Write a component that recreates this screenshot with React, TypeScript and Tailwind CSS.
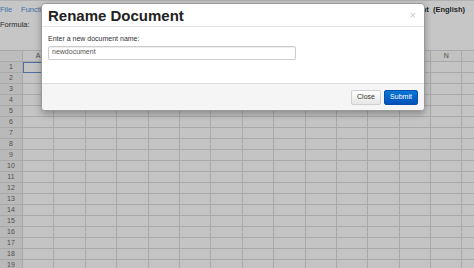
import React from "react";

const cols = ["A", "B", "C", "D", "E", "F", "G", "H", "I", "J", "K", "L", "M", "N", ""];
const rows = Array.from({ length: 19 }, (_, i) => i + 1);

function Sheet() {
  return (
    <div className="grid grid-cols-[23px_repeat(15,31.4px)] text-[7px] text-[#505050]">
      <div className="h-[11px] border-r border-b border-[#a9a9a9] bg-[#bdbdbd]" />
      {cols.map((c, i) => (
        <div
          key={i}
          className="h-[11px] border-r border-b border-[#a9a9a9] bg-[#c2c2c2] flex items-center justify-center"
        >
          {c}
        </div>
      ))}
      {rows.map((r) => (
        <React.Fragment key={r}>
          <div className="h-[11px] border-r border-b border-[#a9a9a9] bg-[#b9b9b9] flex items-center justify-center">
            {r}
          </div>
          {cols.map((c, i) => (
            <div
              key={i}
              className={
                r === 1 && i === 0
                  ? "h-[11px] border border-[#4d6fa3] bg-[#c4c4c4]"
                  : "h-[11px] border-r border-b border-[#a9a9a9] bg-[#c4c4c4]"
              }
            />
          ))}
        </React.Fragment>
      ))}
    </div>
  );
}

export default function App() {
  return (
    <div className="relative w-[474px] h-[268px] overflow-hidden bg-[#c6c6c6] font-['Liberation_Sans',Arial,sans-serif]">
      <div className="h-[51px] border-b border-[#a9a9a9]">
        <div className="h-[18px] flex items-center justify-between pr-[9px] border-t border-[#b0b0b0]">
          <div className="flex gap-[9px] text-[7.5px] text-[#3f6fa8]">
            <span>File</span>
            <span>Functions</span>
          </div>
          <span className="text-[7.5px] font-bold text-[#1e1e1e]">Document &nbsp;(English)</span>
        </div>
        <div className="h-[13px] flex items-center text-[7.5px] text-[#2a2a2a]">Formula:</div>
      </div>
      <Sheet />

      <div className="absolute left-[41px] top-[3px] w-[384px] bg-white rounded-[4px] border border-[#9a9a9a] shadow-[0_3px_7px_rgba(0,0,0,0.3)] overflow-hidden">
        <div className="h-[23px] px-[6px] flex items-center justify-between border-b border-[#e5e5e5]">
          <h3 className="text-[15px] font-bold text-[#222] leading-none">Rename Document</h3>
          <span className="text-[11px] leading-none text-[#c8c8c8] pr-[2px]">×</span>
        </div>
        <div className="px-[6px] pt-[7px] h-[56px]">
          <div className="text-[7px] text-[#333] mb-[1px]">Enter a new document name:</div>
          <div className="w-[248px] h-[14px] border border-[#cccccc] rounded-[2px] flex items-center px-[3px] text-[7px] text-[#555] shadow-[inset_0_1px_1px_rgba(0,0,0,0.075)]">
            newdocument
          </div>
        </div>
        <div className="h-[27px] bg-[#f5f5f5] border-t border-[#dddddd] flex items-center justify-end gap-[3px] pr-[6px]">
          <button className="h-[15px] w-[30px] rounded-[2px] border border-[#cfcfcf] bg-gradient-to-b from-white to-[#e6e6e6] text-[7px] text-[#333]">
            Close
          </button>
          <button className="h-[15px] w-[34px] rounded-[2px] border border-[#0b4fae] bg-gradient-to-b from-[#0a77d6] to-[#0450b8] text-[7px] text-white">
            Submit
          </button>
        </div>
      </div>
    </div>
  );
}
